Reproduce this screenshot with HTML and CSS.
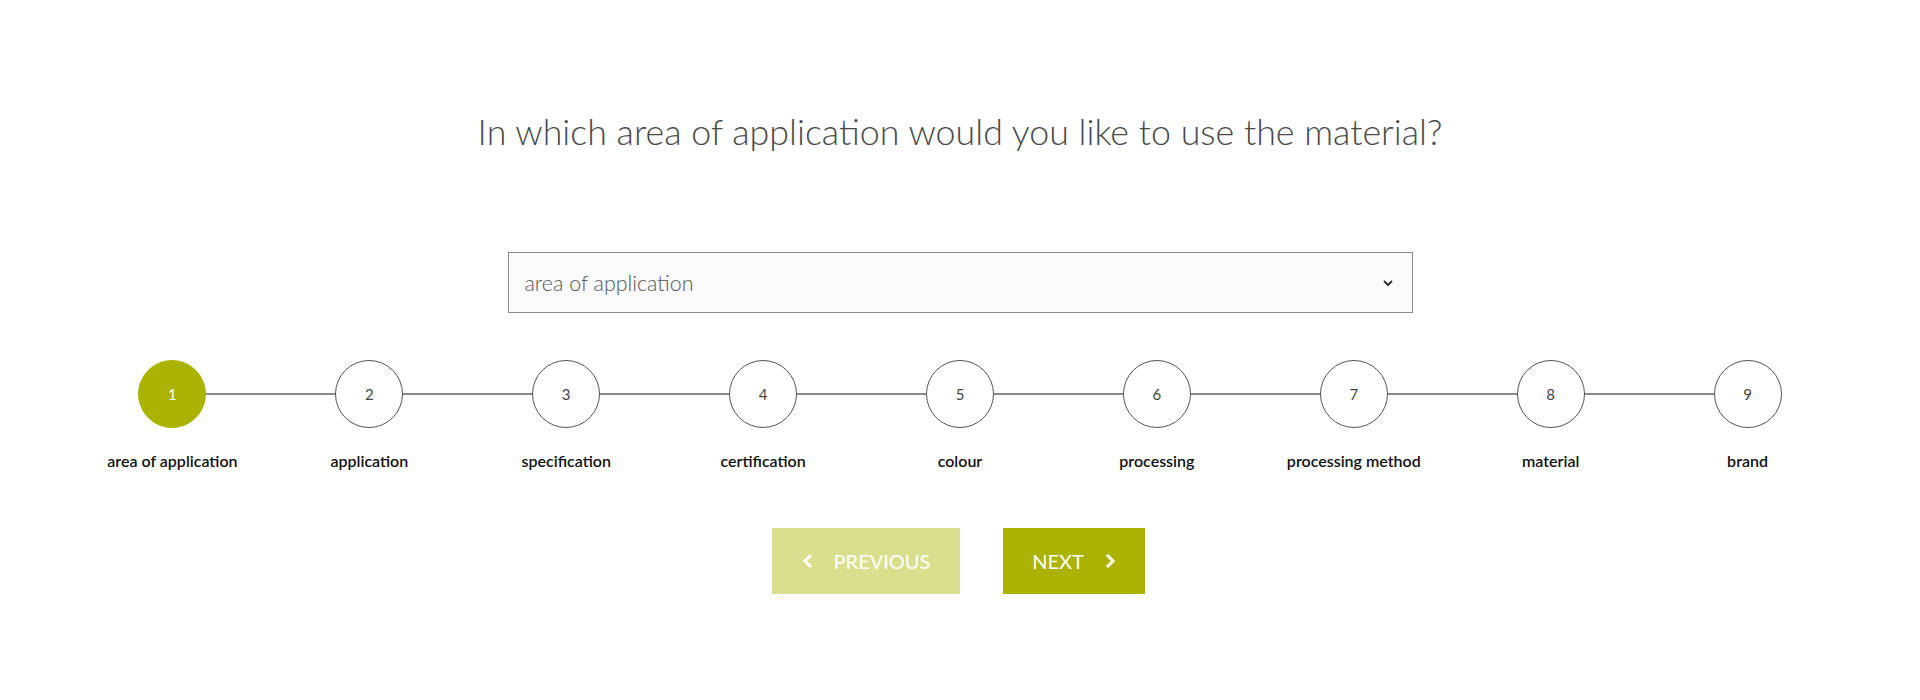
FILE: index.html
```html
<!DOCTYPE html>
<html lang="en">
<head>
<meta charset="utf-8">
<title>Material finder</title>
<link rel="stylesheet" href="styles.css">
</head>
<body>
<main class="wizard">
  <h1 class="question">In which area of application would you like to use the material?</h1>
  <div class="select">
    <span class="select-value">area of application</span>
    <svg class="select-arrow" width="12" height="8" viewBox="0 0 12 8"><path d="M2 2 L6 6 L10 2" fill="none" stroke="#333" stroke-width="2"/></svg>
  </div>
  <ol class="steps">
    <li class="step active"><span class="circle">1</span><span class="label">area of application</span></li>
    <li class="step"><span class="circle">2</span><span class="label">application</span></li>
    <li class="step"><span class="circle">3</span><span class="label">specification</span></li>
    <li class="step"><span class="circle">4</span><span class="label">certification</span></li>
    <li class="step"><span class="circle">5</span><span class="label">colour</span></li>
    <li class="step"><span class="circle">6</span><span class="label">processing</span></li>
    <li class="step"><span class="circle">7</span><span class="label">processing method</span></li>
    <li class="step"><span class="circle">8</span><span class="label">material</span></li>
    <li class="step"><span class="circle">9</span><span class="label">brand</span></li>
  </ol>
  <div class="nav">
    <button class="btn btn-prev"><svg width="12" height="18" viewBox="0 0 12 18"><path d="M9 3 L3 9 L9 15" fill="none" stroke="#fff" stroke-width="3"/></svg><span>PREVIOUS</span></button>
    <button class="btn btn-next"><span>NEXT</span><svg width="12" height="18" viewBox="0 0 12 18"><path d="M3 3 L9 9 L3 15" fill="none" stroke="#fff" stroke-width="3"/></svg></button>
  </div>
</main>
</body>
</html>
```
FILE: styles.css
```css
html, body {
  margin: 0;
  background: #fff;
}
body {
  font-family: "Lato", "Noto Sans", sans-serif;
  color: #222;
}
.wizard {
  padding: 108px 74px 0;
}
.question {
  margin: 0;
  font-size: 35.8px;
  line-height: 48px;
  font-weight: 300;
  color: #4a4a4a;
  text-align: center;
}
.select {
  box-sizing: border-box;
  width: 905px;
  height: 61px;
  margin: 96px auto 0;
  border: 1px solid #8c8c8c;
  background: #fafafa;
  display: flex;
  align-items: center;
  justify-content: space-between;
  padding: 0 18px 0 16px;
}
.select-value {
  font-size: 21.4px;
  font-weight: 300;
  color: #555;
}
.steps {
  list-style: none;
  margin: 47px 0 0;
  padding: 0;
  display: grid;
  grid-template-columns: repeat(9, 1fr);
  position: relative;
}
.steps::before {
  content: "";
  position: absolute;
  left: calc(100% / 18);
  right: calc(100% / 18);
  top: 33px;
  height: 2px;
  background: #8a8a8a;
}
.step {
  display: flex;
  flex-direction: column;
  align-items: center;
  position: relative;
}
.circle {
  box-sizing: border-box;
  width: 68px;
  height: 68px;
  border-radius: 50%;
  border: 1px solid #555;
  background: #fff;
  display: flex;
  align-items: center;
  justify-content: center;
  font-size: 15px;
  color: #444;
}
.step.active .circle {
  background: #aab400;
  border-color: #aab400;
  color: #fff;
}
.label {
  margin-top: 23px;
  font-size: 16px;
  line-height: 20px;
  font-weight: 600;
  color: #111;
}
.nav {
  display: flex;
  justify-content: center;
  gap: 43px;
  margin-top: 57px;
  padding-right: 3px;
}
.btn {
  height: 66px;
  border: 0;
  display: flex;
  align-items: center;
  justify-content: center;
  gap: 20px;
  font-family: inherit;
  font-size: 20px;
  color: #fff;
  cursor: pointer;
}
.btn-prev {
  width: 188px;
  background: #dadf8d;
}
.btn-next {
  width: 142px;
  background: #abb300;
}
```
